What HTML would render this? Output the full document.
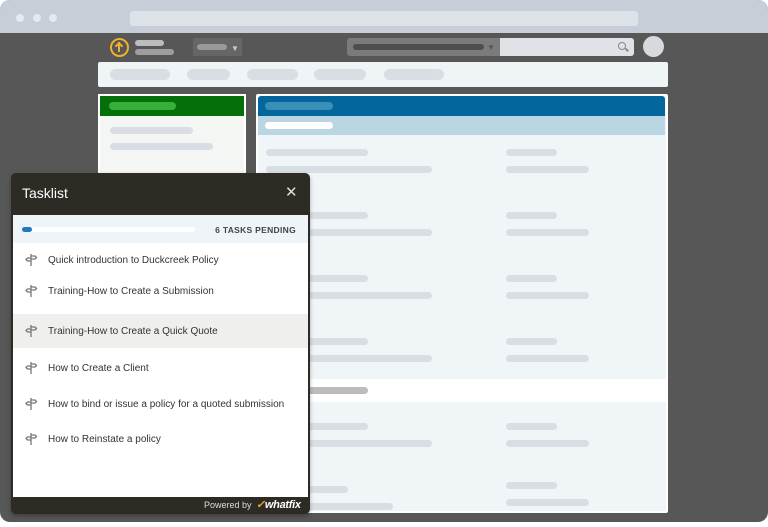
<!DOCTYPE html>
<html><head><meta charset="utf-8"><style>
*{margin:0;padding:0;box-sizing:border-box}
body{width:768px;height:527px;background:#fff;position:relative;overflow:hidden;font-family:"Liberation Sans",sans-serif}
.a{position:absolute}
.frame{left:0;top:0;width:768px;height:522px;background:#575757;border-radius:10px;overflow:hidden}
.pill{position:absolute;border-radius:4px;height:7px;background:#d8dee3}
.it{position:absolute;left:11px;width:298px;height:34px;display:flex;align-items:center;font-size:10px;color:#333}
.it svg{margin-left:13px;margin-right:10px}
</style></head><body>
<div class="a frame">
 <div class="a" style="left:0;top:0;width:768px;height:33px;background:#c7ced8"></div>
 <div class="a" style="left:16px;top:14px;width:8px;height:8px;border-radius:50%;background:#e6e9ee"></div>
 <div class="a" style="left:33px;top:14px;width:8px;height:8px;border-radius:50%;background:#e6e9ee"></div>
 <div class="a" style="left:49px;top:14px;width:8px;height:8px;border-radius:50%;background:#e6e9ee"></div>
 <div class="a" style="left:130px;top:11px;width:508px;height:15px;border-radius:3px;background:#dde2e8"></div>
 <div class="a" style="left:110px;top:38px;width:19px;height:19px;border-radius:50%;border:2px solid #f0b02c"></div>
 <div class="a" style="left:118px;top:42px;width:2px;height:10px;background:#f0b02c"></div>
 <div class="a" style="left:116px;top:43px;width:6px;height:6px;border-left:2px solid #f0b02c;border-top:2px solid #f0b02c;transform:rotate(45deg)"></div>
 <div class="a" style="left:135px;top:40px;width:29px;height:6px;border-radius:3px;background:#bdbdbd"></div>
 <div class="a" style="left:135px;top:49px;width:39px;height:6px;border-radius:3px;background:#9e9e9e"></div>
 <div class="a" style="left:193px;top:38px;width:49px;height:18px;background:#666"></div>
 <div class="a" style="left:197px;top:44px;width:30px;height:6px;border-radius:3px;background:#999"></div>
 <div class="a" style="left:231px;top:44px;color:#ccc;font-size:8px">▼</div>
 <div class="a" style="left:347px;top:38px;width:153px;height:18px;background:#7b7b7b;border-radius:3px 0 0 3px"></div>
 <div class="a" style="left:353px;top:44px;width:131px;height:6px;border-radius:3px;background:#4e4e4e"></div>
 <div class="a" style="left:487px;top:43px;color:#555;font-size:8px">▼</div>
 <div class="a" style="left:500px;top:38px;width:134px;height:18px;background:#dfe3e7;border-radius:0 3px 3px 0"></div>
 <div class="a" style="left:618px;top:42px;width:8px;height:8px;border:1.5px solid #888;border-radius:50%"></div>
 <div class="a" style="left:625px;top:49px;width:4px;height:1.5px;background:#888;transform:rotate(45deg)"></div>
 <div class="a" style="left:643px;top:36px;width:21px;height:21px;border-radius:50%;background:#d6d9dd"></div>
 <div class="a" style="left:98px;top:62px;width:570px;height:25px;background:#eff4f7;border-radius:2px"></div>
 <div class="pill" style="left:110px;top:69px;width:60px;height:11px;border-radius:6px"></div>
 <div class="pill" style="left:187px;top:69px;width:43px;height:11px;border-radius:6px"></div>
 <div class="pill" style="left:247px;top:69px;width:51px;height:11px;border-radius:6px"></div>
 <div class="pill" style="left:314px;top:69px;width:52px;height:11px;border-radius:6px"></div>
 <div class="pill" style="left:384px;top:69px;width:60px;height:11px;border-radius:6px"></div>
 <div class="a" style="left:98px;top:94px;width:148px;height:100px;background:#f3f6f2;border:2px solid #fff;border-bottom:none"></div>
 <div class="a" style="left:100px;top:96px;width:144px;height:20px;background:#05700a"></div>
 <div class="a" style="left:109px;top:102px;width:67px;height:8px;border-radius:4px;background:#35b03a"></div>
 <div class="pill" style="left:110px;top:127px;width:83px"></div>
 <div class="pill" style="left:110px;top:143px;width:103px"></div>
 <div class="a" style="left:256px;top:94px;width:412px;height:419px;background:#f0f5f8;border:2px solid #fff;border-radius:2px"></div>
 <div class="a" style="left:258px;top:96px;width:407px;height:20px;background:#03679d;border-radius:3px 3px 0 0"></div>
 <div class="a" style="left:265px;top:102px;width:68px;height:8px;border-radius:4px;background:#3a8fb8"></div>
 <div class="a" style="left:258px;top:116px;width:407px;height:19px;background:#bad6e2"></div>
 <div class="a" style="left:265px;top:122px;width:68px;height:7px;border-radius:4px;background:#fff"></div>
 <div class="pill" style="left:266px;top:149px;width:102px"></div><div class="pill" style="left:266px;top:166px;width:166px"></div>
 <div class="pill" style="left:506px;top:149px;width:51px"></div><div class="pill" style="left:506px;top:166px;width:83px"></div>
 <div class="pill" style="left:266px;top:212px;width:102px"></div><div class="pill" style="left:266px;top:229px;width:166px"></div>
 <div class="pill" style="left:506px;top:212px;width:51px"></div><div class="pill" style="left:506px;top:229px;width:83px"></div>
 <div class="pill" style="left:266px;top:275px;width:102px"></div><div class="pill" style="left:266px;top:292px;width:166px"></div>
 <div class="pill" style="left:506px;top:275px;width:51px"></div><div class="pill" style="left:506px;top:292px;width:83px"></div>
 <div class="pill" style="left:266px;top:338px;width:102px"></div><div class="pill" style="left:266px;top:355px;width:166px"></div>
 <div class="pill" style="left:506px;top:338px;width:51px"></div><div class="pill" style="left:506px;top:355px;width:83px"></div>
 <div class="a" style="left:258px;top:379px;width:408px;height:23px;background:#fff"></div>
 <div class="pill" style="left:266px;top:387px;width:102px;background:#bcbcbc"></div>
 <div class="pill" style="left:266px;top:423px;width:102px"></div><div class="pill" style="left:266px;top:440px;width:166px"></div>
 <div class="pill" style="left:506px;top:423px;width:51px"></div><div class="pill" style="left:506px;top:440px;width:83px"></div>
 <div class="pill" style="left:266px;top:486px;width:82px"></div><div class="pill" style="left:266px;top:503px;width:127px"></div>
 <div class="pill" style="left:506px;top:482px;width:51px"></div><div class="pill" style="left:506px;top:499px;width:83px"></div>
 <div class="a" style="left:11px;top:173px;width:299px;height:341px;background:#2e2a24;border-radius:5px;box-shadow:0 2px 4px rgba(0,0,0,.3)"></div>
 <div class="a" style="left:22px;top:185px;color:#fff;font-size:14px">Tasklist</div>
 <div class="a" style="left:285px;top:184px;color:#ddd;font-size:15px;line-height:17px">✕</div>
 <div class="a" style="left:13px;top:215px;width:295px;height:282px;background:#fff"></div>
 <div class="a" style="left:13px;top:215px;width:295px;height:28px;background:#eef4f8"></div>
 <div class="a" style="left:22px;top:227px;width:173px;height:5px;background:#fff;border-radius:3px"></div>
 <div class="a" style="left:22px;top:227px;width:10px;height:5px;background:#1e7bb8;border-radius:3px"></div>
 <div class="a" style="left:196px;top:225px;width:100px;text-align:right;font-size:8.5px;font-weight:bold;color:#444;letter-spacing:.3px">6 TASKS PENDING</div>
 <div class="a" style="left:13px;top:314px;width:295px;height:34px;background:#efefed"></div>
 <div class="it" style="top:243px">
  <svg width="14" height="14" viewBox="0 0 14 14" fill="none" stroke="#777" stroke-width="1.3"><path d="M7 1v12M7 3h4l1.5 1.5L11 6H7M7 5H3.5L2 6.5 3.5 8H7"/></svg>Quick introduction to Duckcreek Policy</div>
 <div class="it" style="top:274px">
  <svg width="14" height="14" viewBox="0 0 14 14" fill="none" stroke="#777" stroke-width="1.3"><path d="M7 1v12M7 3h4l1.5 1.5L11 6H7M7 5H3.5L2 6.5 3.5 8H7"/></svg>Training-How to Create a Submission</div>
 <div class="it" style="top:314px">
  <svg width="14" height="14" viewBox="0 0 14 14" fill="none" stroke="#777" stroke-width="1.3"><path d="M7 1v12M7 3h4l1.5 1.5L11 6H7M7 5H3.5L2 6.5 3.5 8H7"/></svg>Training-How to Create a Quick Quote</div>
 <div class="it" style="top:351px">
  <svg width="14" height="14" viewBox="0 0 14 14" fill="none" stroke="#777" stroke-width="1.3"><path d="M7 1v12M7 3h4l1.5 1.5L11 6H7M7 5H3.5L2 6.5 3.5 8H7"/></svg>How to Create a Client</div>
 <div class="it" style="top:387px">
  <svg width="14" height="14" viewBox="0 0 14 14" fill="none" stroke="#777" stroke-width="1.3"><path d="M7 1v12M7 3h4l1.5 1.5L11 6H7M7 5H3.5L2 6.5 3.5 8H7"/></svg>How to bind or issue a policy for a quoted submission</div>
 <div class="it" style="top:422px">
  <svg width="14" height="14" viewBox="0 0 14 14" fill="none" stroke="#777" stroke-width="1.3"><path d="M7 1v12M7 3h4l1.5 1.5L11 6H7M7 5H3.5L2 6.5 3.5 8H7"/></svg>How to Reinstate a policy</div>
 <div class="a" style="left:204px;top:500px;color:#ddd;font-size:9px">Powered by</div>
 <div class="a" style="left:256px;top:498px;color:#fff;font-size:11px;font-style:italic;font-weight:bold;letter-spacing:-.3px"><span style="color:#f5a623">✓</span>whatfix</div>
</div>
</body></html>
